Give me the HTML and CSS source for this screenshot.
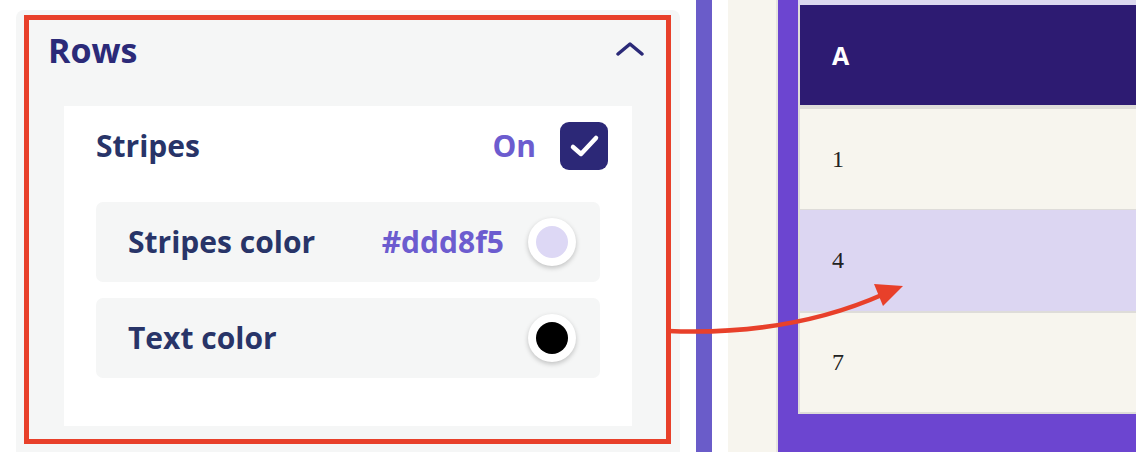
FILE: index.html
```html
<!DOCTYPE html>
<html>
<head>
<meta charset="utf-8">
<link rel="stylesheet" href="styles.css">
</head>
<body>
<div class="page">
  <div class="left">
    <section class="panel">
      <header class="panel-head">
        <h2 class="title">Rows</h2>
        <svg class="chevron" width="28" height="16" viewBox="0 0 28 16"><polyline points="2,13 14,3 26,13" fill="none" stroke="#2b2a78" stroke-width="3.5" stroke-linecap="round" stroke-linejoin="round"/></svg>
      </header>
      <div class="card">
        <div class="toggle-row">
          <span class="label">Stripes</span>
          <div class="toggle">
            <span class="accent">On</span>
            <span class="checkbox">
              <svg width="48" height="48" viewBox="0 0 48 48"><polyline points="13,25 21,32 36,16" fill="none" stroke="#fff" stroke-width="4.5" stroke-linecap="round" stroke-linejoin="round"/></svg>
            </span>
          </div>
        </div>
        <div class="sub-row">
          <span class="label">Stripes color</span>
          <div class="value">
            <span class="accent">#ddd8f5</span>
            <span class="swatch"><span class="dot dot-lav"></span></span>
          </div>
        </div>
        <div class="sub-row">
          <span class="label">Text color</span>
          <div class="value">
            <span class="swatch"><span class="dot dot-black"></span></span>
          </div>
        </div>
      </div>
    </section>
  </div>
  <div class="bar"></div>
  <div class="spacer"></div>
  <div class="beige"></div>
  <div class="preview">
    <div class="table">
      <div class="top-strip"></div>
      <div class="th">A</div>
      <div class="td r1">1</div>
      <div class="td r2 striped">4</div>
      <div class="td r3">7</div>
    </div>
  </div>
</div>
<div class="highlight"></div>
<svg class="arrow" width="1136" height="452" viewBox="0 0 1136 452">
  <path d="M 668 331 Q 790 336 884 294" fill="none" stroke="#e8402a" stroke-width="4.5"/>
  <polygon points="874,284 903,286 883,306" fill="#e8402a"/>
</svg>
</body>
</html>
```

FILE: styles.css
```css
* { box-sizing: border-box; }
html, body { margin: 0; padding: 0; }
body {
  width: 1136px;
  height: 452px;
  overflow: hidden;
  background: #ffffff;
  position: relative;
  font-family: "Open Sans", "Liberation Sans", sans-serif;
}
.page {
  display: flex;
  height: 452px;
}
.left {
  width: 680px;
  padding: 10px 0 0 16px;
  flex: none;
}
.panel {
  background: #f5f6f6;
  height: 100%;
  border-radius: 8px 8px 0 0;
  padding: 20px 36px 0 32px;
}
.panel-head {
  display: flex;
  align-items: center;
  justify-content: space-between;
  height: 40px;
}
.title {
  margin: 0;
  font-size: 34px;
  line-height: 40px;
  font-weight: 700;
  color: #2b2a78;
}
.chevron { display: block; margin-top: -2px; }
.card {
  background: #ffffff;
  margin: 36px 12px 0 16px;
  height: 320px;
  padding: 16px 32px 0 32px;
}
.toggle-row {
  display: flex;
  align-items: center;
  justify-content: space-between;
  height: 48px;
  margin-right: -8px;
}
.label {
  font-size: 30px;
  font-weight: 700;
  color: #283468;
  line-height: 40px;
}
.accent {
  font-size: 30px;
  font-weight: 700;
  color: #6c5ccf;
  line-height: 40px;
}
.toggle {
  display: flex;
  align-items: center;
  gap: 24px;
}
.checkbox {
  width: 48px;
  height: 48px;
  border-radius: 9px;
  background: #2c2877;
  display: block;
}
.checkbox svg { display: block; }
.sub-row {
  display: flex;
  align-items: center;
  justify-content: space-between;
  height: 80px;
  background: #f5f6f6;
  border-radius: 7px;
  padding: 0 24px 0 32px;
  margin-top: 16px;
}
.toggle-row + .sub-row { margin-top: 32px; }
.value {
  display: flex;
  align-items: center;
  gap: 24px;
}
.swatch {
  width: 48px;
  height: 48px;
  border-radius: 50%;
  background: #ffffff;
  box-shadow: 0 2px 5px rgba(0, 0, 0, 0.22);
  display: flex;
  align-items: center;
  justify-content: center;
}
.dot {
  width: 32px;
  height: 32px;
  border-radius: 50%;
}
.dot-lav { background: #ddd8f5; }
.dot-black { background: #000000; }
.bar {
  width: 16px;
  margin-left: 16px;
  background: #6a5cc9;
  flex: none;
}
.spacer { width: 16px; flex: none; }
.beige {
  width: 50px;
  flex: none;
  background: #f7f5ee;
  border-right: 2px solid #e6e4de;
}
.preview {
  flex: 1;
  background: #6c45d0;
  padding-left: 20px;
}
.table {
  display: flex;
  flex-direction: column;
  background: #dedcd9;
  padding-left: 2px;
  height: 414px;
}
.top-strip {
  height: 5px;
  background: #dcd8ef;
  margin-left: -2px;
}
.th {
  height: 100px;
  background: #2d1b72;
  color: #ffffff;
  font-family: "Open Sans", "Liberation Sans", sans-serif;
  font-weight: 700;
  font-size: 25px;
  display: flex;
  align-items: center;
  padding-left: 32px;
  margin-bottom: 4px;
}
.td {
  background: #f7f5ee;
  font-family: "Liberation Serif", serif;
  font-size: 24px;
  color: #222222;
  display: flex;
  align-items: center;
  padding-left: 32px;
}
.r1 { height: 100px; margin-bottom: 1px; }
.r2 { height: 101px; margin-bottom: 2px; }
.r3 { height: 99px; }
.striped { background: #dcd6f2; }
.highlight {
  position: absolute;
  left: 24px;
  top: 15px;
  width: 647px;
  height: 429px;
  border: 5px solid #e8402a;
  pointer-events: none;
}
.arrow {
  position: absolute;
  left: 0;
  top: 0;
  pointer-events: none;
}
```
